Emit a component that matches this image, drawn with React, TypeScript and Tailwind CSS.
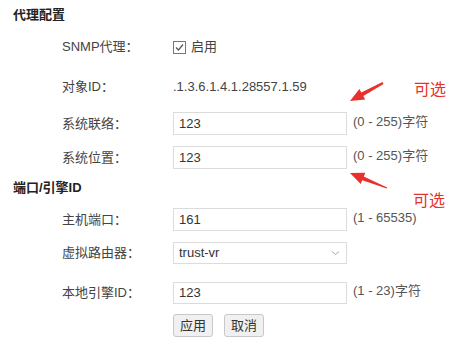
import React from "react";

const font = { fontFamily: '"Liberation Sans", Arial, "Noto Sans CJK SC", sans-serif' };

const Label = ({ children }: { children: React.ReactNode }) => (
  <div className="w-[111px] shrink-0 text-[13px] text-[#444]">{children}</div>
);

const TextInput = ({ value }: { value: string }) => (
  <div className="flex h-full w-[174px] items-center border border-[#dcdcdc] bg-white px-[5px] text-[13px] text-[#333]">
    {value}
  </div>
);

const Hint = ({ children }: { children: React.ReactNode }) => (
  <span className="mb-[4px] ml-[6px] text-[13px] text-[#555]">{children}</span>
);

const Arrows = () => (
  <svg className="pointer-events-none absolute left-0 top-0" width="474" height="347" viewBox="0 0 474 347">
    <polygon
      points="350,101 359.4,89 361.3,92.5 382.5,82.1 383.5,83.9 363.3,96.1 365.2,99.6"
      fill="#e8302c"
    />
    <polygon
      points="350,173 365.3,172.7 363.8,176.4 387.2,187.5 386.8,188.5 362.2,180.2 360.7,183.9"
      fill="#e8302c"
    />
  </svg>
);

export default function App() {
  return (
    <div className="relative h-[347px] w-[474px] overflow-hidden bg-white" style={font}>
      <div className="pl-[13px]">
        <div className="flex h-[30px] items-center text-[13px] font-bold text-[#222]">代理配置</div>
      </div>

      <div className="pl-[62px]">
        <div className="flex h-[34px] items-center">
          <Label>SNMP代理：</Label>
          <div className="flex items-center gap-[5px] text-[13px] text-[#444]">
            <svg width="13" height="13" viewBox="0 0 13 13">
              <rect x="0.5" y="0.5" width="12" height="12" fill="white" stroke="#777" />
              <polyline points="3,6.5 5.5,9 10,3.5" fill="none" stroke="#555" strokeWidth="1.2" />
            </svg>
            <span>启用</span>
          </div>
        </div>

        <div className="flex h-[46px] items-center">
          <Label>对象ID：</Label>
          <span className="text-[13px] text-[#444]">.1.3.6.1.4.1.28557.1.59</span>
        </div>

        <div className="mt-[2px] flex h-[23px] items-center">
          <Label>系统联络：</Label>
          <TextInput value="123" />
          <Hint>(0 - 255)字符</Hint>
        </div>

        <div className="mt-[11px] flex h-[23px] items-center">
          <Label>系统位置：</Label>
          <TextInput value="123" />
          <Hint>(0 - 255)字符</Hint>
        </div>
      </div>

      <div className="pl-[13px]">
        <div className="flex h-[38px] items-center text-[13px] font-bold text-[#222]">端口/引擎ID</div>
      </div>

      <div className="pl-[62px]">
        <div className="mt-[1px] flex h-[23px] items-center">
          <Label>主机端口：</Label>
          <TextInput value="161" />
          <Hint>(1 - 65535)</Hint>
        </div>

        <div className="mt-[11px] flex h-[22px] items-center">
          <Label>虚拟路由器：</Label>
          <div className="flex h-full w-[174px] items-center justify-between border border-[#dcdcdc] bg-white pl-[5px] pr-[6px] text-[13px] text-[#333]">
            <span>trust-vr</span>
            <svg width="9" height="6" viewBox="0 0 9 6">
              <polyline points="1,1.5 4.5,4.5 8,1.5" fill="none" stroke="#aaa" strokeWidth="1" />
            </svg>
          </div>
        </div>

        <div className="mt-[18px] flex h-[22px] items-center">
          <Label>本地引擎ID：</Label>
          <TextInput value="123" />
          <Hint>(1 - 23)字符</Hint>
        </div>

        <div className="mt-[10px] flex h-[23px] items-center">
          <div className="w-[111px] shrink-0" />
          <div className="flex gap-[11px]">
            <button className="h-[23px] w-[40px] rounded-[3px] border border-[#c8c8c8] bg-[#f0f0f0] text-[13px] text-[#333]">
              应用
            </button>
            <button className="h-[23px] w-[40px] rounded-[3px] border border-[#c8c8c8] bg-[#f0f0f0] text-[13px] text-[#333]">
              取消
            </button>
          </div>
        </div>
      </div>

      <Arrows />
      <span className="absolute left-[414px] top-[78px] text-[16px] text-[#e8302c]">可选</span>
      <span className="absolute left-[413px] top-[189px] text-[16px] text-[#e8302c]">可选</span>
    </div>
  );
}
